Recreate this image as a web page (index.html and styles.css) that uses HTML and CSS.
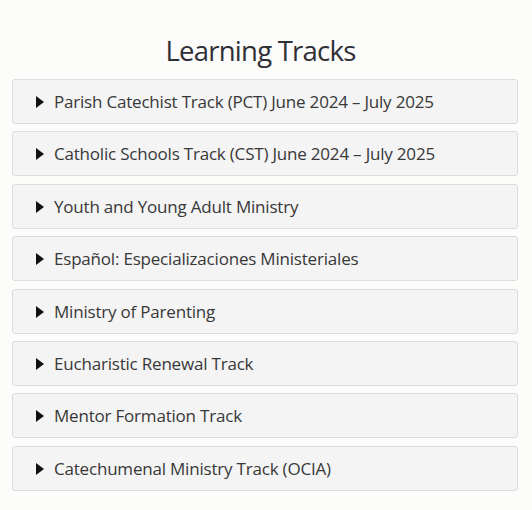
FILE: index.html
```html
<!DOCTYPE html>
<html lang="en">
<head>
<meta charset="utf-8">
<title>Learning Tracks</title>
<link rel="stylesheet" href="styles.css">
</head>
<body>
<main class="page">
  <h1 class="title">Learning Tracks</h1>
  <div class="tracks">
    <div class="track">Parish Catechist Track (PCT) June 2024 – July 2025</div>
    <div class="track">Catholic Schools Track (CST) June 2024 – July 2025</div>
    <div class="track">Youth and Young Adult Ministry</div>
    <div class="track">Español: Especializaciones Ministeriales</div>
    <div class="track">Ministry of Parenting</div>
    <div class="track">Eucharistic Renewal Track</div>
    <div class="track">Mentor Formation Track</div>
    <div class="track">Catechumenal Ministry Track (OCIA)</div>
  </div>
</main>
</body>
</html>
```
FILE: styles.css
```css
html, body {
  margin: 0;
  padding: 0;
  background: #fcfcfb;
}
body {
  font-family: "Open Sans", "Liberation Sans", sans-serif;
  color: #333333;
}
.page {
  padding: 33px 14px 0 12px;
}
.title {
  margin: 0 0 10px 0;
  padding-right: 9px;
  text-align: center;
  font-weight: 400;
  font-size: 27.5px;
  letter-spacing: -0.75px;
  line-height: 36px;
  color: #2f2f36;
}
.tracks {
  display: flex;
  flex-direction: column;
  gap: 7.4px;
}
.track {
  display: flex;
  align-items: center;
  gap: 10px;
  height: 43px;
  padding: 0 23px;
  background: #f4f4f4;
  border: 1px solid #dcdcdc;
  border-radius: 3px;
  font-size: 17px;
  letter-spacing: -0.2px;
  font-weight: 400;
  color: #383838;
}
.track::before {
  content: "";
  width: 0;
  height: 0;
  border-top: 6px solid transparent;
  border-bottom: 6px solid transparent;
  border-left: 8px solid #111;
  margin-top: 1px;
}
```
